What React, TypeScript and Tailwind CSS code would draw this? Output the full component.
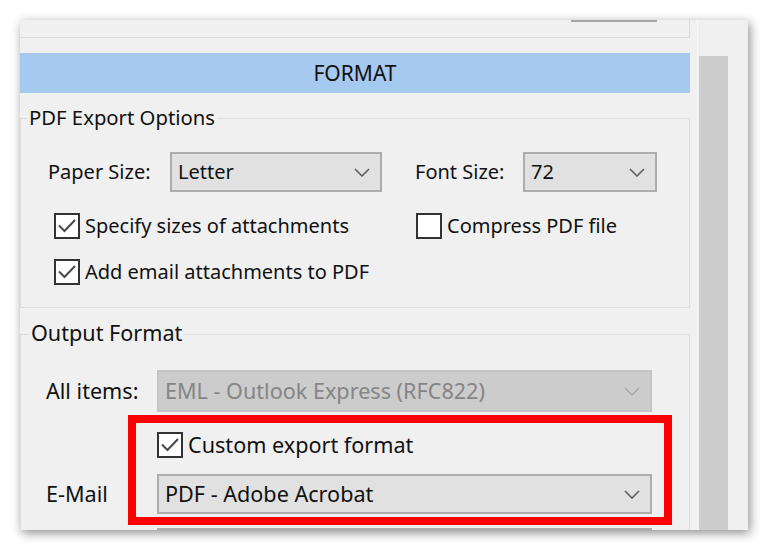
function Chevron({ muted = false }: { muted?: boolean }) {
  return (
    <svg width="16" height="9" viewBox="0 0 16 9" className="shrink-0">
      <path
        d="M1 1 L8 8 L15 1"
        fill="none"
        stroke={muted ? "#a9a9a9" : "#5a5a5a"}
        strokeWidth="1.5"
      />
    </svg>
  );
}

function Select({ value, width, disabled = false, height = "h-[40px]" }: { value: string; width: string; disabled?: boolean; height?: string }) {
  return (
    <div
      className={`${width} ${height} flex items-center justify-between pl-[6px] pr-[10px] border-2 ${
        disabled ? "bg-[#cccccc] border-[#c4c4c4] text-[#858585]" : "bg-[#e1e1e1] border-[#adadad] text-[#111]"
      }`}
    >
      <span className="whitespace-nowrap">{value}</span>
      <Chevron muted={disabled} />
    </div>
  );
}

function Checkbox({ checked }: { checked: boolean }) {
  return (
    <div className="w-[26px] h-[26px] border-2 border-[#333333] bg-white flex items-center justify-center shrink-0">
      {checked && (
        <svg width="22" height="22" viewBox="0 0 22 22">
          <path d="M3 10.5 L8.5 16 L19 5" fill="none" stroke="#4a4a4a" strokeWidth="2" />
        </svg>
      )}
    </div>
  );
}

function CheckRow({ checked, label, width }: { checked: boolean; label: string; width?: string }) {
  return (
    <div className={`flex items-center gap-[5px] ${width ?? ""}`}>
      <Checkbox checked={checked} />
      <span className="whitespace-nowrap">{label}</span>
    </div>
  );
}

export default function App() {
  return (
    <div className="w-[768px] h-[550px] bg-white pt-[20px] pl-[20px] font-['Noto_Sans',sans-serif] text-[20px] leading-[28px] text-[#111]">
      <div className="w-[728px] h-[510px] bg-[#f0f0f0] overflow-hidden flex shadow-[2px_3px_10px_rgba(0,0,0,0.45)]">
        {/* main panel */}
        <div className="w-[670px] shrink-0 flex flex-col">
          <div className="shrink-0 h-[18px] border-b border-r border-[#dcdcdc] flex justify-end pr-[32px]">
            <div className="w-[86px] h-[2px] bg-[#a6a6a6]" />
          </div>

          <div className="shrink-0 mt-[15px] h-[40px] bg-[#a6c9ef] flex items-center justify-center text-[21px]">
            FORMAT
          </div>

          {/* PDF Export Options */}
          <div className="shrink-0 relative mt-[25px] h-[190px] border border-[#dcdcdc] pt-[33px]">
            <span className="absolute left-[6px] top-[-16px] px-[2px] bg-[#f0f0f0] text-[20.3px]">PDF Export Options</span>
            <div className="flex items-center pl-[27px]">
              <span className="w-[122px]">Paper Size:</span>
              <Select value="Letter" width="w-[212px]" />
              <span className="w-[108px] ml-[33px]">Font Size:</span>
              <Select value="72" width="w-[134px]" />
            </div>
            <div className="flex flex-col gap-[18px] pl-[33px] mt-[20px]">
              <div className="flex">
                <CheckRow checked label="Specify sizes of attachments" width="w-[362px]" />
                <CheckRow checked={false} label="Compress PDF file" />
              </div>
              <CheckRow checked label="Add email attachments to PDF" />
            </div>
          </div>

          {/* Output Format */}
          <div className="relative mt-[26px] flex-1 min-h-0 border border-b-0 border-[#dcdcdc] pt-[35px] pl-[25px] text-[21.6px]">
            <span className="absolute left-[8px] top-[-16px] px-[2px] bg-[#f0f0f0]">Output Format</span>
            <div className="grid grid-cols-[111px_495px] items-center">
              <span>All items:</span>
              <Select value="EML - Outlook Express (RFC822)" width="w-[495px]" height="h-[42px]" disabled />
              <span />
              <div className="mt-[19px]">
                <CheckRow checked label="Custom export format" />
              </div>
              <span className="mt-[15px]">E-Mail</span>
              <div className="mt-[15px]">
                <Select value="PDF - Adobe Acrobat" width="w-[495px]" />
              </div>
              <span />
              <div className="mt-[14px] h-[40px] bg-[#e1e1e1] border-2 border-[#adadad]" />
            </div>
            <div className="absolute left-[107px] top-[80px] w-[544px] h-[110px] border-[8px] border-[#ff0000]" />
          </div>
        </div>

        {/* scrollbar */}
        <div className="flex-1 flex pl-[7px]">
          <div className="w-px border-l border-dotted border-white" />
          <div className="w-[29px] ml-px mt-[36px] bg-[#cdcdcd]" />
        </div>
      </div>
    </div>
  );
}
